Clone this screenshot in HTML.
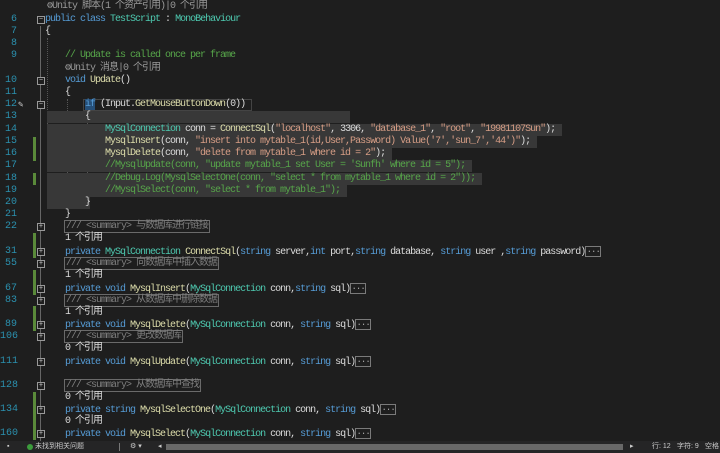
<!DOCTYPE html>
<html><head><meta charset="utf-8"><style>
body{margin:0;width:720px;height:453px;background:#1e1e1e;overflow:hidden;position:relative;font-family:"Liberation Mono","Noto Sans CJK SC",monospace;font-size:10px;letter-spacing:-1px;color:#dcdcdc}
.l{position:absolute;left:0;height:12px;line-height:12px;white-space:pre}
.n{position:absolute;width:17px;text-align:right;color:#2b91af;letter-spacing:0;font-size:10px}
.c{position:absolute;white-space:pre}
.k{color:#569cd6}.t{color:#4ec9b0}.m{color:#dcdcaa}.s{color:#d69d85}.g{color:#57a64a}.d{color:#999}
.sel{background:#383838;height:12px}
.box{border:1px solid #6a6a6a;color:#7f7f7f;padding:0 1px;margin-left:-1px}
.el{display:inline-block;border:1px solid #7a7a7a;width:14px;height:9px;line-height:6px;vertical-align:middle;color:#aaa;font-size:9px;text-align:center}
.bar{position:absolute;left:33px;width:3px;background:#5a8a3a}
.fold{position:absolute;left:37px;width:6px;height:6px;border:1px solid #999;font-size:7px;line-height:6px;text-align:center;color:#ccc;letter-spacing:0;background:#1e1e1e}
.vg{position:absolute;border-left:1px dotted #555}
</style></head><body>
<div class="vg" style="left:40px;top:26px;height:420px;border-left:1px solid #666"></div>
<div class="vg" style="left:47px;top:38px;height:170px"></div>
<div class="vg" style="left:67px;top:99px;height:110px"></div>
<div class="vg" style="left:87px;top:123px;height:78px"></div>
<div class="bar" style="top:137px;height:24px"></div>
<div class="bar" style="top:173px;height:12px"></div>
<div class="bar" style="top:233px;height:25px"></div>
<div class="bar" style="top:270px;height:25px"></div>
<div class="bar" style="top:306px;height:25px"></div>
<div class="bar" style="top:392px;height:48px"></div>

<div class="l" style="top:1px"><span class="c d" style="left:47px">⚙Unity 脚本(1 个资产引用)|0 个引用</span></div>
<div class="l" style="top:14px"><span class="n">6</span><span class="fold" style="top:2px">−</span><span class="c" style="left:45px"><span class="k">public class</span> <span class="t">TestScript</span> : <span class="t">MonoBehaviour</span></span></div>
<div class="l" style="top:26px"><span class="n">7</span><span class="c" style="left:45px">{</span></div>
<div class="l" style="top:38px"><span class="n">8</span></div>
<div class="l" style="top:50px"><span class="n">9</span><span class="c g" style="left:65px">// Update is called once per frame</span></div>
<div class="l" style="top:63px"><span class="c d" style="left:65px">⚙Unity 消息|0 个引用</span></div>
<div class="l" style="top:75px"><span class="n">10</span><span class="fold" style="top:2px">−</span><span class="c" style="left:65px"><span class="k">void</span> <span class="m">Update</span>()</span></div>
<div class="l" style="top:87px"><span class="n">11</span><span class="c" style="left:65px">{</span></div>
<div class="l" style="top:99px"><span class="n">12</span><span class="fold" style="top:2px">−</span><span style="position:absolute;left:18px;top:0;color:#ccc;letter-spacing:0;font-size:9px">✎</span><span class="c" style="left:83px;top:0;border:1px solid #444;height:10px;width:167px"></span><span class="c" style="left:85px"><span class="k" style="background:#264f78">if</span> (Input.<span class="m">GetMouseButtonDown</span>(0))</span></div>
<div class="l" style="top:111px"><span class="n">13</span><span class="c sel" style="left:47px;width:303px"></span><span class="c" style="left:85px">{</span></div>
<div class="l" style="top:124px"><span class="n">14</span><span class="c sel" style="left:47px;width:515px"></span><span class="c" style="left:105px"><span class="t">MySqlConnection</span> conn = <span class="m">ConnectSql</span>(<span class="s">"localhost"</span>, 3306, <span class="s">"database_1"</span>, <span class="s">"root"</span>, <span class="s">"19981107Sun"</span>);</span></div>
<div class="l" style="top:136px"><span class="n">15</span><span class="c sel" style="left:47px;width:490px"></span><span class="c" style="left:105px"><span class="m">MysqlInsert</span>(conn, <span class="s">"insert into mytable_1(id,User,Password) Value('7','sun_7','44')"</span>);</span></div>
<div class="l" style="top:148px"><span class="n">16</span><span class="c sel" style="left:47px;width:345px"></span><span class="c" style="left:105px"><span class="m">MysqlDelete</span>(conn, <span class="s">"delete from mytable_1 where id = 2"</span>);</span></div>
<div class="l" style="top:160px"><span class="n">17</span><span class="c sel" style="left:47px;width:425px"></span><span class="c g" style="left:105px">//MysqlUpdate(conn, "update mytable_1 set User = 'Sunfh' where id = 5");</span></div>
<div class="l" style="top:173px"><span class="n">18</span><span class="c sel" style="left:47px;width:435px"></span><span class="c g" style="left:105px">//Debug.Log(MysqlSelectOne(conn, "select * from mytable_1 where id = 2"));</span></div>
<div class="l" style="top:185px"><span class="n">19</span><span class="c sel" style="left:47px;width:300px"></span><span class="c g" style="left:105px">//MysqlSelect(conn, "select * from mytable_1");</span></div>
<div class="l" style="top:197px"><span class="n">20</span><span class="c sel" style="left:47px;width:43px"></span><span class="c" style="left:85px">}</span></div>
<div class="l" style="top:209px"><span class="n">21</span><span class="c" style="left:65px">}</span></div>
<div class="l" style="top:221px"><span class="n">22</span><span class="fold" style="top:2px">+</span><span class="c g" style="left:65px"><span class="box">/// &lt;summary&gt; 与数据库进行链接</span></span></div>
<div class="l" style="top:233px"><span class="c" style="left:65px">1 个引用</span></div>
<div class="l" style="top:246px"><span class="n">31</span><span class="fold" style="top:2px">+</span><span class="c" style="left:65px"><span class="k">private</span> <span class="t">MySqlConnection</span> <span class="m">ConnectSql</span>(<span class="k">string</span> server,<span class="k">int</span> port,<span class="k">string</span> database, <span class="k">string</span> user ,<span class="k">string</span> password)<span class="el">...</span></span></div>
<div class="l" style="top:258px"><span class="n">55</span><span class="fold" style="top:2px">+</span><span class="c" style="left:65px"><span class="box">/// &lt;summary&gt; 向数据库中插入数据</span></span></div>
<div class="l" style="top:270px"><span class="c" style="left:65px">1 个引用</span></div>
<div class="l" style="top:283px"><span class="n">67</span><span class="fold" style="top:2px">+</span><span class="c" style="left:65px"><span class="k">private void</span> <span class="m">MysqlInsert</span>(<span class="t">MySqlConnection</span> conn,<span class="k">string</span> sql)<span class="el">...</span></span></div>
<div class="l" style="top:295px"><span class="n">83</span><span class="fold" style="top:2px">+</span><span class="c" style="left:65px"><span class="box">/// &lt;summary&gt; 从数据库中删除数据</span></span></div>
<div class="l" style="top:307px"><span class="c" style="left:65px">1 个引用</span></div>
<div class="l" style="top:319px"><span class="n">89</span><span class="fold" style="top:2px">+</span><span class="c" style="left:65px"><span class="k">private void</span> <span class="m">MysqlDelete</span>(<span class="t">MySqlConnection</span> conn, <span class="k">string</span> sql)<span class="el">...</span></span></div>
<div class="l" style="top:331px"><span class="n">106</span><span class="fold" style="top:2px">+</span><span class="c" style="left:65px"><span class="box">/// &lt;summary&gt; 更改数据库</span></span></div>
<div class="l" style="top:343px"><span class="c" style="left:65px">0 个引用</span></div>
<div class="l" style="top:356px"><span class="n">111</span><span class="fold" style="top:2px">+</span><span class="c" style="left:65px"><span class="k">private void</span> <span class="m">MysqlUpdate</span>(<span class="t">MySqlConnection</span> conn, <span class="k">string</span> sql)<span class="el">...</span></span></div>
<div class="l" style="top:380px"><span class="n">128</span><span class="fold" style="top:2px">+</span><span class="c" style="left:65px"><span class="box">/// &lt;summary&gt; 从数据库中查找</span></span></div>
<div class="l" style="top:392px"><span class="c" style="left:65px">0 个引用</span></div>
<div class="l" style="top:404px"><span class="n">134</span><span class="fold" style="top:2px">+</span><span class="c" style="left:65px"><span class="k">private string</span> <span class="m">MysqlSelectOne</span>(<span class="t">MySqlConnection</span> conn, <span class="k">string</span> sql)<span class="el">...</span></span></div>
<div class="l" style="top:416px"><span class="c" style="left:65px">0 个引用</span></div>
<div class="l" style="top:428px"><span class="n">160</span><span class="fold" style="top:2px">+</span><span class="c" style="left:65px"><span class="k">private void</span> <span class="m">MysqlSelect</span>(<span class="t">MySqlConnection</span> conn, <span class="k">string</span> sql)<span class="el">...</span></span></div>

<div style="position:absolute;left:0;top:441px;width:720px;height:12px;background:#252526;font-family:'Liberation Sans','Noto Sans CJK SC',sans-serif;font-size:7px;letter-spacing:0;color:#ccc;line-height:12px">
<span style="position:absolute;left:7px">▪</span>
<span style="position:absolute;left:27px;top:3px;width:6px;height:6px;border-radius:50%;background:#3c9c3c"></span>
<span style="position:absolute;left:35px">未找到相关问题</span>
<span style="position:absolute;left:119px;top:2px;width:1px;height:8px;background:#777"></span>
<span style="position:absolute;left:130px">⚙ ▾</span>
<span style="position:absolute;left:158px">◂</span>
<span style="position:absolute;left:166px;top:3px;width:457px;height:6px;background:#686868"></span>
<span style="position:absolute;left:630px">▸</span>
<span style="position:absolute;left:652px">行: 12</span>
<span style="position:absolute;left:677px">字符: 9</span>
<span style="position:absolute;left:705px">空格</span>
</div>
</body></html>
